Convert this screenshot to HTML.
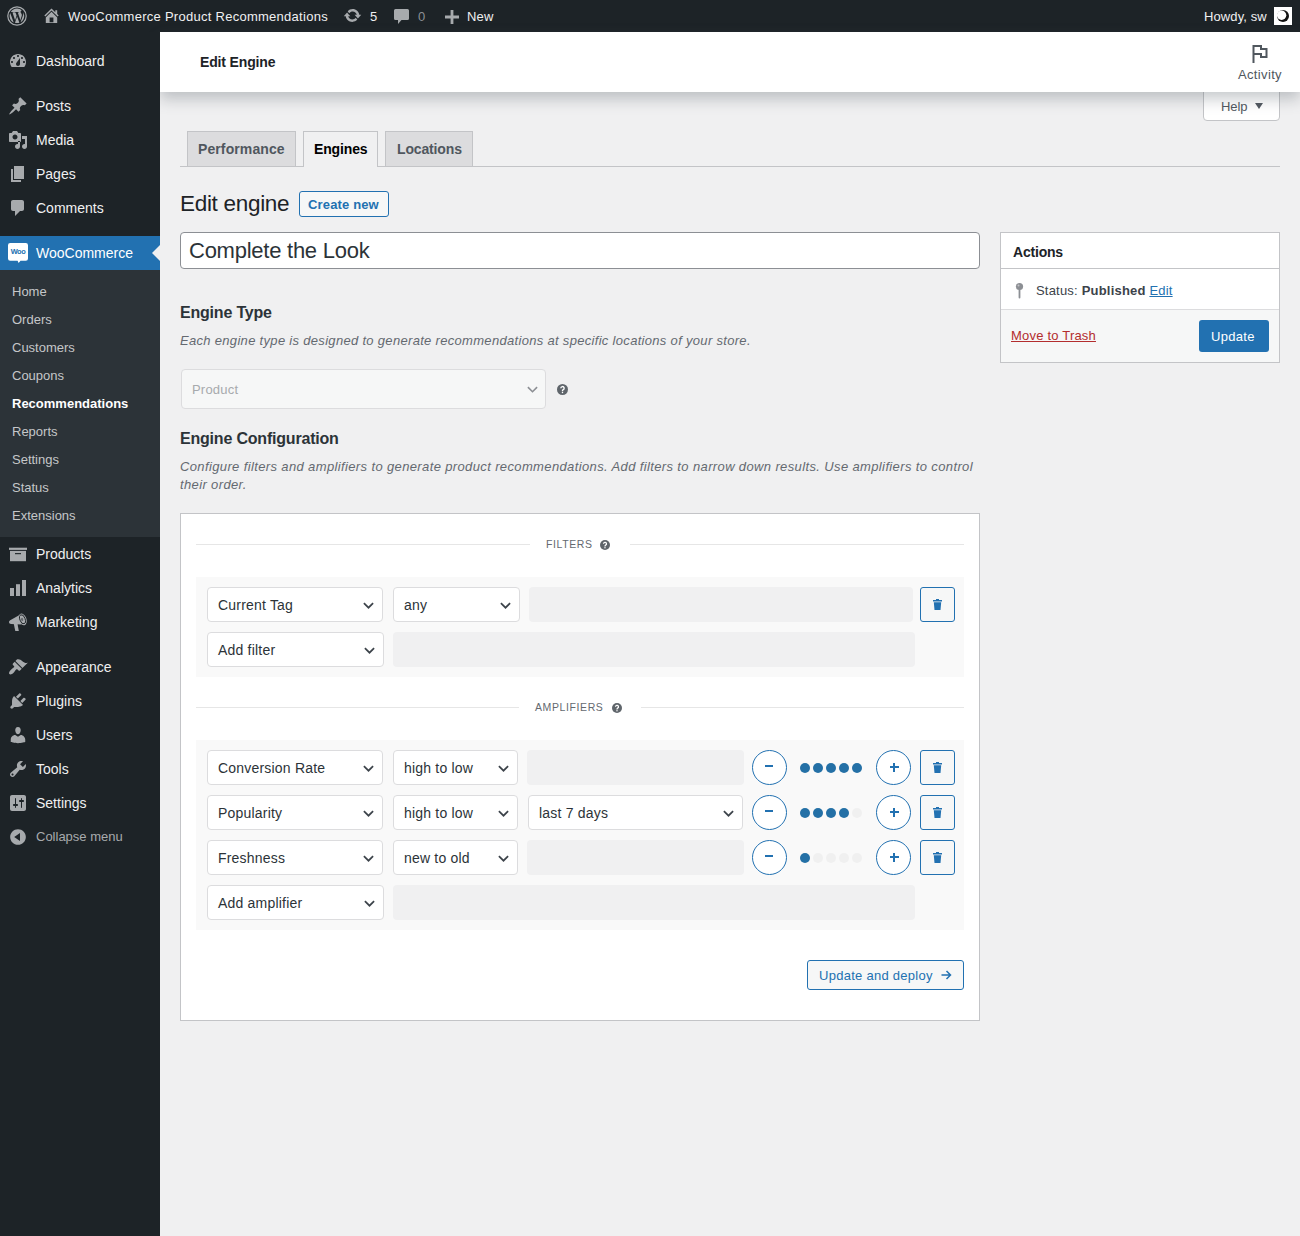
<!DOCTYPE html>
<html><head><meta charset="utf-8">
<style>
*{box-sizing:border-box;margin:0;padding:0}
html,body{width:1300px;height:1236px;overflow:hidden}
body{background:#f0f0f1;font-family:"Liberation Sans",sans-serif;color:#3c434a;font-size:13px;position:relative}
.abs{position:absolute}
#adminbar{position:absolute;left:0;top:0;width:1300px;height:32px;background:#1d2327;color:#f0f0f1;font-size:13px}
#adminbar .t{position:absolute;top:0.7px;line-height:32px;white-space:nowrap}
#side{position:absolute;left:0;top:32px;width:160px;height:1204px;background:#1d2327;z-index:6}
.mi{position:absolute;left:0;width:160px;height:34px;line-height:34px;color:#f0f0f1;font-size:14px;padding-left:36px;white-space:nowrap}
.mi svg{position:absolute;left:8px;top:7px;width:20px;height:20px}
.sub{position:absolute;left:0;width:160px;background:#2c3338}
.si{position:absolute;left:12px;height:28px;line-height:29.4px;font-size:13px;color:#c5c7c9;white-space:nowrap}
#hdr{position:absolute;left:160px;top:32px;width:1140px;height:60px;background:#fff;box-shadow:0 7px 14px 0 rgba(85,93,102,.33);z-index:5}
.tab{position:absolute;top:131px;height:36px;border:1px solid #c3c4c7;border-bottom:none;background:#dcdcde;color:#50575e;font-weight:bold;font-size:14px;line-height:34px;text-align:center}
.sel{position:absolute;height:34px;background:#fff;border:1px solid #dcdcde;border-radius:4px;font-size:14px;color:#2c3338;line-height:32px;padding-left:10px;white-space:nowrap}
.sel:after{content:"";position:absolute;right:12px;top:11px;width:6px;height:6px;border-right:1.6px solid #3c434a;border-bottom:1.6px solid #3c434a;transform:rotate(45deg)}
.ph{position:absolute;height:34px;background:#f0f0f1;border-radius:4px}
.trash{position:absolute;width:35px;height:35px;border:1px solid #2271b1;border-radius:3px;background:#f6f7f7}
.circ{position:absolute;width:35px;height:35px;border:1px solid #2271b1;border-radius:50%;background:#fff;color:#2271b1}
.dot{position:absolute;width:11px;height:11px;border-radius:50%;background:#2271b1}
.dot.off{background:#ececec}
</style></head>
<body>
<div id="adminbar">
<svg class="abs" style="left:7px;top:6px" width="20" height="20" viewBox="0 0 20 20"><circle cx="10" cy="10" r="9.2" fill="none" stroke="#a7aaad" stroke-width="1.2"/><path fill="#a7aaad" d="M2.6 10c0 2.9 1.7 5.4 4.1 6.6L3.2 7C2.8 7.9 2.6 8.9 2.6 10zm12.3-.4c0-.9-.3-1.5-.6-2-.4-.6-.7-1.1-.7-1.7 0-.7.5-1.3 1.2-1.3h.1C13.6 3.5 11.9 2.6 10 2.6c-2.6 0-4.9 1.3-6.2 3.4h.5c.8 0 2-.1 2-.1.4 0 .4.6 0 .6 0 0-.4 0-.8.1l2.6 7.6 1.5-4.6-1.1-3c-.4 0-.8-.1-.8-.1-.4 0-.3-.6 0-.6 0 0 1.2.1 1.9.1.8 0 2-.1 2-.1.4 0 .4.6 0 .6 0 0-.4 0-.8.1l2.6 7.6.7-2.4c.4-1 .6-1.7.6-2.3zm-4.8 1l-2.1 6.2c.6.2 1.3.3 2 .3.8 0 1.6-.1 2.4-.4l-.1-.1-2.2-6zm6.1-4c0 .3.1.5.1.8 0 .7-.1 1.5-.5 2.5l-2.2 6.4c2.1-1.2 3.6-3.6 3.6-6.3 0-1.3-.3-2.5-.9-3.5z"/></svg>
<svg class="abs" style="left:42.2px;top:6.4px" width="19" height="19" viewBox="0 0 20 20"><path fill="#a7aaad" d="M16 8.5l1.53 1.53-1.06 1.06L10 4.62l-6.47 6.47-1.06-1.06L10 2.5l4 4v-2h2v4zm-6-2.46l6 5.99V18H4v-5.97zM12 17v-5H8v5h4z"/></svg>
<span class="t" style="left:68px;letter-spacing:0.27px">WooCommerce Product Recommendations</span>
<svg class="abs" style="left:343px;top:6.1px" width="19" height="19" viewBox="0 0 20 20"><path fill="#a7aaad" d="M10.2 3.28c3.53 0 6.43 2.61 6.92 6h2.08l-3.5 4-3.5-4h2.32c-.45-1.97-2.210-3.45-4.32-3.45-1.45 0-2.73.71-3.54 1.78L4.95 5.66C6.23 4.2 8.11 3.28 10.2 3.28zm-.4 13.44c-3.52 0-6.43-2.61-6.92-6H.8l3.5-4c1.17 1.33 2.33 2.67 3.5 4H5.48c.45 1.97 2.21 3.45 4.32 3.45 1.45 0 2.73-.71 3.54-1.78l1.71 1.95c-1.28 1.46-3.15 2.38-5.25 2.38z"/></svg>
<span class="t" style="left:370px">5</span>
<svg class="abs" style="left:394px;top:9px" width="15" height="16" viewBox="0 0 15 16"><path fill="#a7aaad" d="M1.5 0h12a1.5 1.5 0 0 1 1.5 1.5v8a1.5 1.5 0 0 1-1.5 1.5H7.5L4 15v-4H1.5A1.5 1.5 0 0 1 0 9.5v-8A1.5 1.5 0 0 1 1.5 0z"/></svg>
<span class="t" style="left:418px;color:#8c8f94">0</span>
<svg class="abs" style="left:445px;top:10px" width="14" height="14" viewBox="0 0 14 14"><path fill="#a7aaad" d="M5.6 0h2.8v5.6H14v2.8H8.4V14H5.6V8.4H0V5.6h5.6z"/></svg>
<span class="t" style="left:467px;letter-spacing:0.2px">New</span>
<span class="t" style="left:1204px;letter-spacing:0.1px">Howdy, sw</span>
<div class="abs" style="left:1274px;top:7px;width:18px;height:18px;background:#fff"><svg width="18" height="18" viewBox="0 0 18 18"><circle cx="9" cy="9" r="6" fill="#111"/><circle cx="7.6" cy="8.2" r="4.7" fill="#fff"/></svg></div>
</div>
<div id="side">
<div class="mi" style="top:12px;"><svg viewBox="0 0 20 20"><path fill="#a7aaad" fill-rule="evenodd" d="M3.76 16h12.48c1.1-1.37 1.76-3.11 1.76-5 0-4.42-3.58-8-8-8s-8 3.58-8 8c0 1.89.66 3.63 1.76 5zM10 4c.55 0 1 .45 1 1s-.45 1-1 1-1-.45-1-1 .45-1 1-1zM6 6c.55 0 1 .45 1 1s-.45 1-1 1-1-.45-1-1 .45-1 1-1zm8 0c.55 0 1 .45 1 1s-.45 1-1 1-1-.45-1-1 .45-1 1-1zm-5.37 5.55L12 7v6c0 1.1-.9 2-2 2s-2-.9-2-2c0-.57.24-1.08.63-1.45zM4 10c.55 0 1 .45 1 1s-.45 1-1 1-1-.45-1-1 .45-1 1-1zm12 0c.55 0 1 .45 1 1s-.45 1-1 1-1-.45-1-1 .45-1 1-1z"/></svg>Dashboard</div>
<div class="mi" style="top:57px;"><svg viewBox="0 0 20 20"><path fill="#a7aaad" fill-rule="nonzero" d="M10.44 3.02l1.82-1.820 6.36 6.35-1.83 1.82c-1.05-.68-2.48-.57-3.41.36l-.75.75c-.92.93-1.04 2.35-.35 3.41l-1.83 1.82-2.41-2.41-2.8 2.79c-.42.42-3.38 2.71-3.8 2.29s1.86-3.39 2.28-3.81l2.79-2.79L4.1 9.36l1.83-1.82c1.05.69 2.48.57 3.4-.36l.75-.75c.93-.92 1.05-2.35.36-3.41z"/></svg>Posts</div>
<div class="mi" style="top:91px;"><svg viewBox="0 0 20 20"><path fill="#a7aaad" fill-rule="evenodd" d="M13 11V4c0-.55-.45-1-1-1h-1.67L9 1H5L3.67 3H2c-.55 0-1 .45-1 1v7c0 .55.45 1 1 1h10c.55 0 1-.45 1-1zM7 4.5c1.38 0 2.5 1.12 2.5 2.5S8.38 9.5 7 9.5 4.5 8.380 4.5 7 5.62 4.5 7 4.5zM14 6h5v10.5c0 1.38-1.12 2.5-2.5 2.5S14 17.88 14 16.5s1.12-2.5 2.5-2.5c.17 0 .34.02.5.05V9h-3V6zm-4 8.05V11h2v5.5c0 1.38-1.12 2.5-2.5 2.5S7 17.88 7 16.5 8.12 14 9.5 14c.17 0 .34.02.5.05z"/></svg>Media</div>
<div class="mi" style="top:125px;"><svg viewBox="0 0 20 20"><path fill="#a7aaad" fill-rule="nonzero" d="M6 15V2h10v13H6zm-1 1h8v2H3V5h2v11z"/></svg>Pages</div>
<div class="mi" style="top:159px;"><svg viewBox="0 0 20 20"><path fill="#a7aaad" fill-rule="nonzero" d="M5 2h9c1.1 0 2 .9 2 2v7c0 1.1-.9 2-2 2h-2l-5 5v-5H5c-1.1 0-2-.9-2-2V4c0-1.1.9-2 2-2z"/></svg>Comments</div>
<div class="sub" style="top:238px;height:267px"></div>
<div class="mi" style="top:204px;background:#2271b1;color:#fff"><svg viewBox="0 0 20 20" style="top:7px;left:8px;width:20px;height:20px"><path fill="#fff" d="M2.2 0h15.6A2.2 2.2 0 0 1 20 2.2v13.3a2.2 2.2 0 0 1-2.2 2.2h-5.3l-1.9 2.3-1-2.3H2.2A2.2 2.2 0 0 1 0 15.5V2.2A2.2 2.2 0 0 1 2.2 0z"/><text x="10" y="11.2" text-anchor="middle" font-family="Liberation Sans" font-size="7.4" font-weight="bold" fill="#2271b1" letter-spacing="-0.4">Woo</text></svg>WooCommerce</div>
<div class="abs" style="left:152px;top:213px;width:0;height:0;border-top:8px solid transparent;border-bottom:8px solid transparent;border-right:8px solid #f0f0f1"></div>
<div class="si" style="top:245px;">Home</div>
<div class="si" style="top:273px;">Orders</div>
<div class="si" style="top:301px;">Customers</div>
<div class="si" style="top:329px;">Coupons</div>
<div class="si" style="top:357px;color:#fff;font-weight:bold">Recommendations</div>
<div class="si" style="top:385px;">Reports</div>
<div class="si" style="top:413px;">Settings</div>
<div class="si" style="top:441px;">Status</div>
<div class="si" style="top:469px;">Extensions</div>
<div class="mi" style="top:505px;"><svg viewBox="0 0 20 20"><rect x="1" y="3.7" width="18" height="2.2" fill="#a7aaad"/><rect x="2" y="6.9" width="16" height="10.3" fill="#a7aaad"/><rect x="7" y="9.1" width="6" height="1.1" fill="#1d2327"/></svg>Products</div>
<div class="mi" style="top:539px;"><svg viewBox="0 0 20 20"><rect x="2" y="10" width="4" height="8" fill="#a7aaad"/><rect x="8" y="6.2" width="4" height="11.8" fill="#a7aaad"/><rect x="14" y="2" width="4" height="16" fill="#a7aaad"/></svg>Analytics</div>
<div class="mi" style="top:573px;"><svg viewBox="0 0 20 20"><path fill="#a7aaad" d="M2.2 8.2L11.5 3l2 9.6-10.4-.5C.6 11.6.4 9 2.2 8.2z"/><path fill="#a7aaad" d="M5.8 12l3.7-.2 1.3 7.2H7.3z"/><ellipse cx="14.6" cy="7.4" rx="3.8" ry="6.1" transform="rotate(-20 14.6 7.4)" fill="#a7aaad"/><ellipse cx="14.5" cy="7.3" rx="2.6" ry="4.7" transform="rotate(-20 14.5 7.3)" fill="none" stroke="#1d2327" stroke-width=".9"/><ellipse cx="14.1" cy="7.4" rx="1.1" ry="1.6" transform="rotate(-20 14.1 7.4)" fill="#1d2327" opacity=".5"/></svg>Marketing</div>
<div class="mi" style="top:618px;"><svg viewBox="0 0 20 20"><path fill="#a7aaad" d="M14.48 11.06L7.41 3.99l1.5-1.5c.5-.56 2.3-.47 3.51.32 1.21.8 1.43 1.28 2.91 2.1 1.18.64 2.45 1.26 4.45.85zm-.71.71L6.7 4.7 4.93 6.47c-.39.39-.39 1.02 0 1.41l1.06 1.06c.39.39.39 1.03 0 1.42-.6.6-1.430 1.11-2.21 1.69-.35.26-.7.53-1.01.84C1.43 14.23.4 16.08 1.4 17.07c.99 1 2.84-.03 4.18-1.36.31-.31.58-.66.85-1.02.57-.78 1.08-1.61 1.69-2.21.39-.39 1.02-.39 1.41 0l1.06 1.06c.39.39 1.02.39 1.41 0z"/></svg>Appearance</div>
<div class="mi" style="top:652px;"><svg viewBox="0 0 20 20"><path fill="#a7aaad" fill-rule="nonzero" d="M13.11 4.36L9.87 7.6 8 5.73l3.24-3.24c.35-.34 1.05-.2 1.56.32.52.51.66 1.21.31 1.55zm-8 1.77l.91-1.12 9.01 9.01-1.19.84c-.71.71-2.63 1.16-3.82 1.16H6.14L4.9 17.26c-.59.59-1.54.59-2.12 0-.59-.58-.59-1.53 0-2.12l1.24-1.24v-3.88c0-1.13.4-3.19 1.09-3.89zm7.26 3.97l3.24-3.24c.34-.35 1.04-.21 1.55.31.52.51.66 1.21.31 1.55l-3.24 3.25z"/></svg>Plugins</div>
<div class="mi" style="top:686px;"><svg viewBox="0 0 20 20"><path fill="#a7aaad" fill-rule="nonzero" d="M10 9.25c-2.27 0-2.73-3.44-2.73-3.44C7 4.02 7.82 2 9.97 2c2.16 0 2.98 2.02 2.710 3.81 0 0-.41 3.44-2.68 3.44zm0 2.57L12.72 10c2.39 0 4.52 2.33 4.52 4.53v2.49s-3.65 1.13-7.24 1.13c-3.65 0-7.24-1.13-7.24-1.13v-2.49c0-2.25 1.94-4.48 4.47-4.48z"/></svg>Users</div>
<div class="mi" style="top:720px;"><svg viewBox="0 0 20 20"><path fill="#a7aaad" fill-rule="evenodd" d="M16.68 9.77c-1.34 1.34-3.3 1.67-4.95.99l-5.41 6.52c-.99.99-2.59.99-3.58 0s-.99-2.59 0-3.57l6.52-5.42c-.68-1.65-.35-3.61.99-4.95 1.28-1.28 3.12-1.62 4.72-1.06l-2.89 2.89 2.82 2.82 2.86-2.87c.53 1.58.18 3.39-1.08 4.65zM3.81 16.21c.4.39 1.04.39 1.43 0 .4-.4.4-1.04 0-1.43-.39-.4-1.03-.4-1.43 0-.39.39-.39 1.03 0 1.43z"/></svg>Tools</div>
<div class="mi" style="top:754px;"><svg viewBox="0 0 20 20"><path fill="#a7aaad" fill-rule="evenodd" d="M18 16V4c0-1.1-.9-2-2-2H4c-1.1 0-2 .9-2 2v12c0 1.1.9 2 2 2h12c1.1 0 2-.9 2-2zM8 11h1c.55 0 1 .45 1 1s-.45 1-1 1H8v1.5c0 .28-.22.5-.5.5s-.5-.22-.5-.5V13H6c-.55 0-1-.45-1-1s.45-1 1-1h1V5.5c0-.28.22-.5.5-.5s.5.22.5.5V11zm5-2h-1c-.55 0-1-.45-1-1s.45-1 1-1h1V5.5c0-.28.22-.5.5-.5s.5.22.5.5V7h1c.55 0 1 .45 1 1s-.45 1-1 1h-1v5.5c0 .28-.22.5-.5.5s-.5-.22-.5-.5V9z"/></svg>Settings</div>
<div class="mi" style="top:788px;color:#a7aaad;font-size:13px"><svg viewBox="0 0 20 20"><path fill="#a7aaad" fill-rule="evenodd" d="M10 2.16c4.33 0 7.84 3.51 7.84 7.84s-3.51 7.840-7.84 7.84S2.16 14.33 2.16 10 5.71 2.16 10 2.16zm2 11.72V6.12L6.18 9.97z"/></svg>Collapse menu</div>
</div>

<div id="hdr"></div><div class="abs " style="left:200px;top:52.15px;font-size:14px;line-height:20px;white-space:nowrap;color:#1d2327;font-weight:bold;letter-spacing:-0.15px;z-index:7">Edit Engine</div>
<svg class="abs" style="left:1251px;top:44px;z-index:7" width="18" height="20" viewBox="0 0 18 20"><path fill="none" stroke="#50575e" stroke-width="2" d="M2.5 19V2h7.5v3h5.5v8H10v-3H2.5"/></svg><div class="abs " style="left:1238px;top:64.50px;font-size:13px;line-height:20px;white-space:nowrap;color:#50575e;letter-spacing:0.35px;z-index:7">Activity</div>
<div class="abs" style="left:1203px;top:80px;width:77px;height:41px;border:1px solid #c3c4c7;border-radius:0 0 4px 4px;background:#fff"></div><div class="abs " style="left:1221px;top:96.50px;font-size:13px;line-height:20px;white-space:nowrap;color:#50575e;letter-spacing:-0.1px">Help</div>
<div class="abs" style="left:1255px;top:103px;width:0;height:0;border-left:4px solid transparent;border-right:4px solid transparent;border-top:6px solid #50575e"></div><div class="abs" style="left:180px;top:166px;width:1100px;height:1px;background:#c3c4c7"></div><div class="abs" style="left:187px;top:131px;width:109px;height:35px;border:1px solid #c3c4c7;border-bottom:none;background:#dcdcde"></div><div class="abs " style="left:198px;top:139.15px;font-size:14px;line-height:20px;white-space:nowrap;font-weight:bold;color:#50575e;letter-spacing:0.1px">Performance</div>
<div class="abs" style="left:303px;top:131px;width:75px;height:36px;border:1px solid #c3c4c7;border-bottom:none;background:#f0f0f1"></div><div class="abs " style="left:314px;top:139.15px;font-size:14px;line-height:20px;white-space:nowrap;font-weight:bold;color:#000;letter-spacing:-0.15px">Engines</div>
<div class="abs" style="left:385px;top:131px;width:88px;height:35px;border:1px solid #c3c4c7;border-bottom:none;background:#dcdcde"></div><div class="abs " style="left:397px;top:139.15px;font-size:14px;line-height:20px;white-space:nowrap;font-weight:bold;color:#50575e;letter-spacing:-0.15px">Locations</div>
<div class="abs " style="left:180px;top:189.20px;font-size:22.5px;line-height:30px;white-space:nowrap;color:#1d2327;letter-spacing:-0.3px">Edit engine</div>
<div class="abs" style="left:299px;top:191px;width:90px;height:26px;border:1px solid #2271b1;border-radius:3px;background:#f6f7f7"></div><div class="abs " style="left:308px;top:194.50px;font-size:13px;line-height:20px;white-space:nowrap;color:#2271b1;font-weight:bold;letter-spacing:0.15px">Create new</div>
<div class="abs" style="left:180px;top:232px;width:800px;height:37px;border:1px solid #8c8f94;border-radius:4px;background:#fff"></div><div class="abs " style="left:189px;top:236.18px;font-size:22px;line-height:30px;white-space:nowrap;color:#2c3338;letter-spacing:-0.25px">Complete the Look</div>
<div class="abs" style="left:1000px;top:232px;width:280px;height:131px;border:1px solid #c3c4c7;background:#fff"></div><div class="abs" style="left:1001px;top:268px;width:278px;height:1px;background:#c3c4c7"></div><div class="abs" style="left:1001px;top:309px;width:278px;height:53px;border-top:1px solid #dcdcde;background:#f6f7f7"></div><div class="abs " style="left:1013px;top:242.15px;font-size:14px;line-height:20px;white-space:nowrap;color:#1d2327;font-weight:bold;letter-spacing:-0.2px">Actions</div>
<svg class="abs" style="left:1014px;top:282px" width="11" height="17" viewBox="0 0 11 17"><circle cx="5.5" cy="4.5" r="3.6" fill="#8c8f94"/><rect x="4.6" y="6" width="1.8" height="10.5" rx=".9" fill="#8c8f94"/><circle cx="4.5" cy="3.6" r="1" fill="#c3c4c7"/></svg><div class="abs " style="left:1036px;top:280.50px;font-size:13px;line-height:20px;white-space:nowrap;color:#3c434a;letter-spacing:0.2px">Status: <b style="color:#3c434a">Published</b> <span style="color:#2271b1;text-decoration:underline">Edit</span></div>
<div class="abs " style="left:1011px;top:325.50px;font-size:13px;line-height:20px;white-space:nowrap;color:#b32d2e;text-decoration:underline;letter-spacing:0.2px">Move to Trash</div>
<div class="abs" style="left:1199px;top:320px;width:70px;height:32px;border-radius:3px;background:#2271b1"></div><div class="abs " style="left:1211px;top:326.50px;font-size:13px;line-height:20px;white-space:nowrap;color:#fff;letter-spacing:0.3px">Update</div>
<div class="abs " style="left:180px;top:302.46px;font-size:16px;line-height:22px;white-space:nowrap;color:#2c3338;font-weight:bold;letter-spacing:-0.2px">Engine Type</div>
<div class="abs " style="left:180px;top:330.50px;font-size:13px;line-height:20px;white-space:nowrap;color:#646970;font-style:italic;letter-spacing:0.31px">Each engine type is designed to generate recommendations at specific locations of your store.</div>
<div class="abs" style="left:181px;top:369px;width:365px;height:40px;border:1px solid #dcdcde;border-radius:4px;background:#f6f7f7"></div><div class="abs " style="left:192px;top:379.50px;font-size:13px;line-height:20px;white-space:nowrap;color:#a7aaad;letter-spacing:0.2px">Product</div>
<svg class="abs" style="left:526.5px;top:386px" width="11" height="7" viewBox="0 0 11 7"><path d="M0.9 1.1l4.6 4.6 4.6-4.6" fill="none" stroke="#8c8f94" stroke-width="1.6"/></svg><svg class="abs" style="left:556.5px;top:383.5px" width="11.0" height="11.0" viewBox="0 0 12 12"><circle cx="6" cy="6" r="6" fill="#5f656b"/><path fill="none" stroke="#fff" stroke-width="1.5" d="M4.2 4.6a1.8 1.8 0 1 1 2.6 1.6c-.6.3-.8.6-.8 1.2v.4"/><circle cx="6" cy="9.3" r=".85" fill="#fff"/></svg><div class="abs " style="left:180px;top:428.46px;font-size:16px;line-height:22px;white-space:nowrap;color:#2c3338;font-weight:bold;letter-spacing:-0.2px">Engine Configuration</div>
<div class="abs " style="left:180px;top:456.50px;font-size:13px;line-height:20px;white-space:nowrap;color:#646970;font-style:italic;letter-spacing:0.37px">Configure filters and amplifiers to generate product recommendations. Add filters to narrow down results. Use amplifiers to control</div>
<div class="abs " style="left:180px;top:474.50px;font-size:13px;line-height:20px;white-space:nowrap;color:#646970;font-style:italic;letter-spacing:0.37px">their order.</div>
<div class="abs" style="left:180px;top:513px;width:800px;height:508px;border:1px solid #c3c4c7;background:#fff"></div><div class="abs" style="left:196px;top:544px;width:334px;height:1px;background:#e6e6e6"></div><div class="abs" style="left:630px;top:544px;width:334px;height:1px;background:#e6e6e6"></div><div class="abs " style="left:546px;top:536.16px;font-size:10.5px;line-height:16px;white-space:nowrap;color:#646970;letter-spacing:0.6px">FILTERS</div>
<svg class="abs" style="left:600px;top:540px" width="10" height="10" viewBox="0 0 12 12"><circle cx="6" cy="6" r="6" fill="#5f656b"/><path fill="none" stroke="#fff" stroke-width="1.5" d="M4.2 4.6a1.8 1.8 0 1 1 2.6 1.6c-.6.3-.8.6-.8 1.2v.4"/><circle cx="6" cy="9.3" r=".85" fill="#fff"/></svg><div class="abs" style="left:196px;top:577px;width:768px;height:100px;background:#f9f9f9"></div><div class="abs" style="left:207px;top:587px;width:176px;height:35px;border:1px solid #dcdcde;border-radius:4px;background:#fff"></div><div class="abs " style="left:218px;top:594.65px;font-size:14px;line-height:20px;white-space:nowrap;color:#2c3338;letter-spacing:0.2px">Current Tag</div>
<svg class="abs" style="left:363.4px;top:602px" width="11" height="7" viewBox="0 0 11 7"><path d="M0.9 1.1l4.6 4.6 4.6-4.6" fill="none" stroke="#3c434a" stroke-width="1.7"/></svg><div class="abs" style="left:393px;top:587px;width:127px;height:35px;border:1px solid #dcdcde;border-radius:4px;background:#fff"></div><div class="abs " style="left:404px;top:594.65px;font-size:14px;line-height:20px;white-space:nowrap;color:#2c3338;letter-spacing:0.2px">any</div>
<svg class="abs" style="left:500.4px;top:602px" width="11" height="7" viewBox="0 0 11 7"><path d="M0.9 1.1l4.6 4.6 4.6-4.6" fill="none" stroke="#3c434a" stroke-width="1.7"/></svg><div class="abs" style="left:529px;top:587px;width:384px;height:35px;border-radius:4px;background:#f0f0f1"></div><div class="abs" style="left:920px;top:587px;width:35px;height:35px;border:1px solid #2271b1;border-radius:3px;background:#f6f7f7"></div><svg class="abs" style="left:933px;top:599px" width="9" height="11" viewBox="0 0 9 11"><path fill="#2271b1" d="M3 0h3v1h3v1.6H0V1h3zM.8 3.3h7.4L7.5 11H1.5z"/></svg><div class="abs" style="left:207px;top:632px;width:177px;height:35px;border:1px solid #dcdcde;border-radius:4px;background:#fff"></div><div class="abs " style="left:218px;top:639.65px;font-size:14px;line-height:20px;white-space:nowrap;color:#2c3338;letter-spacing:0.2px">Add filter</div>
<svg class="abs" style="left:364.4px;top:647px" width="11" height="7" viewBox="0 0 11 7"><path d="M0.9 1.1l4.6 4.6 4.6-4.6" fill="none" stroke="#3c434a" stroke-width="1.7"/></svg><div class="abs" style="left:393px;top:632px;width:522px;height:35px;border-radius:4px;background:#f0f0f1"></div><div class="abs" style="left:196px;top:707px;width:323px;height:1px;background:#e6e6e6"></div><div class="abs" style="left:641px;top:707px;width:323px;height:1px;background:#e6e6e6"></div><div class="abs " style="left:535px;top:699.16px;font-size:10.5px;line-height:16px;white-space:nowrap;color:#646970;letter-spacing:0.6px">AMPLIFIERS</div>
<svg class="abs" style="left:612px;top:703px" width="10" height="10" viewBox="0 0 12 12"><circle cx="6" cy="6" r="6" fill="#5f656b"/><path fill="none" stroke="#fff" stroke-width="1.5" d="M4.2 4.6a1.8 1.8 0 1 1 2.6 1.6c-.6.3-.8.6-.8 1.2v.4"/><circle cx="6" cy="9.3" r=".85" fill="#fff"/></svg><div class="abs" style="left:196px;top:740px;width:768px;height:190px;background:#f9f9f9"></div><div class="abs" style="left:207px;top:750px;width:176px;height:35px;border:1px solid #dcdcde;border-radius:4px;background:#fff"></div><div class="abs " style="left:218px;top:757.65px;font-size:14px;line-height:20px;white-space:nowrap;color:#2c3338;letter-spacing:0.2px">Conversion Rate</div>
<svg class="abs" style="left:363.4px;top:765px" width="11" height="7" viewBox="0 0 11 7"><path d="M0.9 1.1l4.6 4.6 4.6-4.6" fill="none" stroke="#3c434a" stroke-width="1.7"/></svg><div class="abs" style="left:393px;top:750px;width:125px;height:35px;border:1px solid #dcdcde;border-radius:4px;background:#fff"></div><div class="abs " style="left:404px;top:757.65px;font-size:14px;line-height:20px;white-space:nowrap;color:#2c3338;letter-spacing:0.2px">high to low</div>
<svg class="abs" style="left:498.4px;top:765px" width="11" height="7" viewBox="0 0 11 7"><path d="M0.9 1.1l4.6 4.6 4.6-4.6" fill="none" stroke="#3c434a" stroke-width="1.7"/></svg><div class="abs" style="left:527px;top:750px;width:217px;height:35px;border-radius:4px;background:#f0f0f1"></div><div class="abs" style="left:752px;top:750px;width:35px;height:35px;border:1px solid #2271b1;border-radius:50%;background:#fff"></div><div class="abs" style="left:765px;top:765.2px;width:8px;height:2px;background:#2271b1"></div><div class="abs" style="left:876px;top:750px;width:35px;height:35px;border:1px solid #2271b1;border-radius:50%;background:#fff"></div><div class="abs" style="left:889.5px;top:766px;width:9px;height:2px;background:#2271b1"></div><div class="abs" style="left:893px;top:762.5px;width:2px;height:9px;background:#2271b1"></div><div class="abs" style="left:800px;top:763px;width:10px;height:10px;border-radius:50%;background:#2470a6"></div><div class="abs" style="left:813px;top:763px;width:10px;height:10px;border-radius:50%;background:#2470a6"></div><div class="abs" style="left:826px;top:763px;width:10px;height:10px;border-radius:50%;background:#2470a6"></div><div class="abs" style="left:839px;top:763px;width:10px;height:10px;border-radius:50%;background:#2470a6"></div><div class="abs" style="left:852px;top:763px;width:10px;height:10px;border-radius:50%;background:#2470a6"></div><div class="abs" style="left:920px;top:750px;width:35px;height:35px;border:1px solid #2271b1;border-radius:3px;background:#f6f7f7"></div><svg class="abs" style="left:933px;top:762px" width="9" height="11" viewBox="0 0 9 11"><path fill="#2271b1" d="M3 0h3v1h3v1.6H0V1h3zM.8 3.3h7.4L7.5 11H1.5z"/></svg><div class="abs" style="left:207px;top:795px;width:176px;height:35px;border:1px solid #dcdcde;border-radius:4px;background:#fff"></div><div class="abs " style="left:218px;top:802.65px;font-size:14px;line-height:20px;white-space:nowrap;color:#2c3338;letter-spacing:0.2px">Popularity</div>
<svg class="abs" style="left:363.4px;top:810px" width="11" height="7" viewBox="0 0 11 7"><path d="M0.9 1.1l4.6 4.6 4.6-4.6" fill="none" stroke="#3c434a" stroke-width="1.7"/></svg><div class="abs" style="left:393px;top:795px;width:125px;height:35px;border:1px solid #dcdcde;border-radius:4px;background:#fff"></div><div class="abs " style="left:404px;top:802.65px;font-size:14px;line-height:20px;white-space:nowrap;color:#2c3338;letter-spacing:0.2px">high to low</div>
<svg class="abs" style="left:498.4px;top:810px" width="11" height="7" viewBox="0 0 11 7"><path d="M0.9 1.1l4.6 4.6 4.6-4.6" fill="none" stroke="#3c434a" stroke-width="1.7"/></svg><div class="abs" style="left:528px;top:795px;width:215px;height:35px;border:1px solid #dcdcde;border-radius:4px;background:#fff"></div><div class="abs " style="left:539px;top:802.65px;font-size:14px;line-height:20px;white-space:nowrap;color:#2c3338;letter-spacing:0.2px">last 7 days</div>
<svg class="abs" style="left:723.4px;top:810px" width="11" height="7" viewBox="0 0 11 7"><path d="M0.9 1.1l4.6 4.6 4.6-4.6" fill="none" stroke="#3c434a" stroke-width="1.7"/></svg><div class="abs" style="left:752px;top:795px;width:35px;height:35px;border:1px solid #2271b1;border-radius:50%;background:#fff"></div><div class="abs" style="left:765px;top:810.2px;width:8px;height:2px;background:#2271b1"></div><div class="abs" style="left:876px;top:795px;width:35px;height:35px;border:1px solid #2271b1;border-radius:50%;background:#fff"></div><div class="abs" style="left:889.5px;top:811px;width:9px;height:2px;background:#2271b1"></div><div class="abs" style="left:893px;top:807.5px;width:2px;height:9px;background:#2271b1"></div><div class="abs" style="left:800px;top:808px;width:10px;height:10px;border-radius:50%;background:#2470a6"></div><div class="abs" style="left:813px;top:808px;width:10px;height:10px;border-radius:50%;background:#2470a6"></div><div class="abs" style="left:826px;top:808px;width:10px;height:10px;border-radius:50%;background:#2470a6"></div><div class="abs" style="left:839px;top:808px;width:10px;height:10px;border-radius:50%;background:#2470a6"></div><div class="abs" style="left:852px;top:808px;width:10px;height:10px;border-radius:50%;background:#f0f0f0"></div><div class="abs" style="left:920px;top:795px;width:35px;height:35px;border:1px solid #2271b1;border-radius:3px;background:#f6f7f7"></div><svg class="abs" style="left:933px;top:807px" width="9" height="11" viewBox="0 0 9 11"><path fill="#2271b1" d="M3 0h3v1h3v1.6H0V1h3zM.8 3.3h7.4L7.5 11H1.5z"/></svg><div class="abs" style="left:207px;top:840px;width:176px;height:35px;border:1px solid #dcdcde;border-radius:4px;background:#fff"></div><div class="abs " style="left:218px;top:847.65px;font-size:14px;line-height:20px;white-space:nowrap;color:#2c3338;letter-spacing:0.2px">Freshness</div>
<svg class="abs" style="left:363.4px;top:855px" width="11" height="7" viewBox="0 0 11 7"><path d="M0.9 1.1l4.6 4.6 4.6-4.6" fill="none" stroke="#3c434a" stroke-width="1.7"/></svg><div class="abs" style="left:393px;top:840px;width:125px;height:35px;border:1px solid #dcdcde;border-radius:4px;background:#fff"></div><div class="abs " style="left:404px;top:847.65px;font-size:14px;line-height:20px;white-space:nowrap;color:#2c3338;letter-spacing:0.2px">new to old</div>
<svg class="abs" style="left:498.4px;top:855px" width="11" height="7" viewBox="0 0 11 7"><path d="M0.9 1.1l4.6 4.6 4.6-4.6" fill="none" stroke="#3c434a" stroke-width="1.7"/></svg><div class="abs" style="left:527px;top:840px;width:217px;height:35px;border-radius:4px;background:#f0f0f1"></div><div class="abs" style="left:752px;top:840px;width:35px;height:35px;border:1px solid #2271b1;border-radius:50%;background:#fff"></div><div class="abs" style="left:765px;top:855.2px;width:8px;height:2px;background:#2271b1"></div><div class="abs" style="left:876px;top:840px;width:35px;height:35px;border:1px solid #2271b1;border-radius:50%;background:#fff"></div><div class="abs" style="left:889.5px;top:856px;width:9px;height:2px;background:#2271b1"></div><div class="abs" style="left:893px;top:852.5px;width:2px;height:9px;background:#2271b1"></div><div class="abs" style="left:800px;top:853px;width:10px;height:10px;border-radius:50%;background:#2470a6"></div><div class="abs" style="left:813px;top:853px;width:10px;height:10px;border-radius:50%;background:#f0f0f0"></div><div class="abs" style="left:826px;top:853px;width:10px;height:10px;border-radius:50%;background:#f0f0f0"></div><div class="abs" style="left:839px;top:853px;width:10px;height:10px;border-radius:50%;background:#f0f0f0"></div><div class="abs" style="left:852px;top:853px;width:10px;height:10px;border-radius:50%;background:#f0f0f0"></div><div class="abs" style="left:920px;top:840px;width:35px;height:35px;border:1px solid #2271b1;border-radius:3px;background:#f6f7f7"></div><svg class="abs" style="left:933px;top:852px" width="9" height="11" viewBox="0 0 9 11"><path fill="#2271b1" d="M3 0h3v1h3v1.6H0V1h3zM.8 3.3h7.4L7.5 11H1.5z"/></svg><div class="abs" style="left:207px;top:885px;width:177px;height:35px;border:1px solid #dcdcde;border-radius:4px;background:#fff"></div><div class="abs " style="left:218px;top:892.65px;font-size:14px;line-height:20px;white-space:nowrap;color:#2c3338;letter-spacing:0.2px">Add amplifier</div>
<svg class="abs" style="left:364.4px;top:900px" width="11" height="7" viewBox="0 0 11 7"><path d="M0.9 1.1l4.6 4.6 4.6-4.6" fill="none" stroke="#3c434a" stroke-width="1.7"/></svg><div class="abs" style="left:393px;top:885px;width:522px;height:35px;border-radius:4px;background:#f0f0f1"></div><div class="abs" style="left:807px;top:960px;width:157px;height:30px;border:1px solid #2271b1;border-radius:3px;background:#f6f7f7"></div><div class="abs " style="left:819px;top:965.50px;font-size:13px;line-height:20px;white-space:nowrap;color:#2271b1;letter-spacing:0.27px">Update and deploy</div>
<svg class="abs" style="left:941px;top:970px" width="11" height="10" viewBox="0 0 11 10"><path fill="none" stroke="#2271b1" stroke-width="1.5" d="M0.5 5h9M5.5 1l4 4-4 4"/></svg>
</body></html>
